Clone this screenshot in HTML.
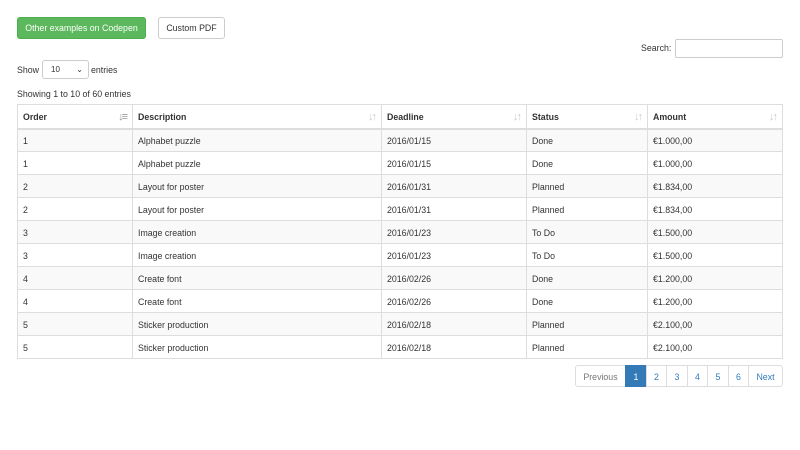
<!DOCTYPE html>
<html><head><meta charset="utf-8"><style>
*{box-sizing:border-box;margin:0;padding:0}
body{width:800px;height:450px;background:#fff;font-family:"Liberation Sans",sans-serif;font-size:8.8px;color:#333;position:relative;overflow:hidden}
.a{position:absolute;white-space:nowrap}
.btn{position:absolute;height:22px;border-radius:3px;font-size:8.8px;display:flex;align-items:center;justify-content:center;white-space:nowrap}
table{position:absolute;left:17px;top:104px;width:765px;border-collapse:collapse;table-layout:fixed}
td,th{border:1px solid #ddd;padding:2px 5px 0;height:23px;text-align:left;font-size:8.8px;vertical-align:middle;white-space:nowrap}
th{font-weight:bold;position:relative;height:24px;border-bottom:2px solid #ddd}
tbody tr:nth-child(odd){background:#f9f9f9}
.s{position:absolute;right:6px;top:6px;color:#ccc;font-size:11px;letter-spacing:-2px;font-weight:normal}
.pg{position:absolute;top:365px;height:22px;border:1px solid #ddd;display:flex;align-items:center;justify-content:center;color:#337ab7;padding-top:1px}
</style></head><body>
<div class="btn" style="left:17px;top:17px;width:129px;background:#5cb85c;color:#fff;border:1px solid #4cae4c">Other examples on Codepen</div>
<div class="btn" style="left:158px;top:17px;width:67px;background:#fff;border:1px solid #ccc">Custom PDF</div>
<div class="a" style="left:641px;top:43px">Search:</div>
<div class="a" style="left:675px;top:39px;width:108px;height:19px;border:1px solid #ccc;border-radius:2px"></div>
<div class="a" style="left:17px;top:65px">Show</div>
<div class="a" style="left:42px;top:60px;width:47px;height:19px;border:1px solid #ccc;border-radius:3px;font-size:8px;line-height:17px;padding-left:8px">10<span style="position:absolute;right:5px;top:0;font-size:8px">&#8964;</span></div>
<div class="a" style="left:91px;top:65px">entries</div>
<div class="a" style="left:17px;top:89px">Showing 1 to 10 of 60 entries</div>
<table>
<colgroup><col style="width:115px"><col style="width:249px"><col style="width:145px"><col style="width:121px"><col style="width:135px"></colgroup>
<thead><tr><th>Order<span class="s" style="color:#999">↓≡</span></th><th>Description<span class="s">↓↑</span></th><th>Deadline<span class="s">↓↑</span></th><th>Status<span class="s">↓↑</span></th><th>Amount<span class="s">↓↑</span></th></tr></thead>
<tbody>
<tr><td>1</td><td>Alphabet puzzle</td><td>2016/01/15</td><td>Done</td><td>€1.000,00</td></tr>
<tr><td>1</td><td>Alphabet puzzle</td><td>2016/01/15</td><td>Done</td><td>€1.000,00</td></tr>
<tr><td>2</td><td>Layout for poster</td><td>2016/01/31</td><td>Planned</td><td>€1.834,00</td></tr>
<tr><td>2</td><td>Layout for poster</td><td>2016/01/31</td><td>Planned</td><td>€1.834,00</td></tr>
<tr><td>3</td><td>Image creation</td><td>2016/01/23</td><td>To Do</td><td>€1.500,00</td></tr>
<tr><td>3</td><td>Image creation</td><td>2016/01/23</td><td>To Do</td><td>€1.500,00</td></tr>
<tr><td>4</td><td>Create font</td><td>2016/02/26</td><td>Done</td><td>€1.200,00</td></tr>
<tr><td>4</td><td>Create font</td><td>2016/02/26</td><td>Done</td><td>€1.200,00</td></tr>
<tr><td>5</td><td>Sticker production</td><td>2016/02/18</td><td>Planned</td><td>€2.100,00</td></tr>
<tr><td>5</td><td>Sticker production</td><td>2016/02/18</td><td>Planned</td><td>€2.100,00</td></tr>
</tbody></table>
<div class="pg" style="left:575px;width:51px;color:#777;border-radius:3px 0 0 3px">Previous</div>
<div class="pg" style="left:625px;width:22px;background:#337ab7;border-color:#337ab7;color:#fff">1</div>
<div class="pg" style="left:646px;width:21px">2</div>
<div class="pg" style="left:666px;width:22px">3</div>
<div class="pg" style="left:687px;width:21px">4</div>
<div class="pg" style="left:707px;width:22px">5</div>
<div class="pg" style="left:728px;width:21px">6</div>
<div class="pg" style="left:748px;width:35px;border-radius:0 3px 3px 0">Next</div>
</body></html>
